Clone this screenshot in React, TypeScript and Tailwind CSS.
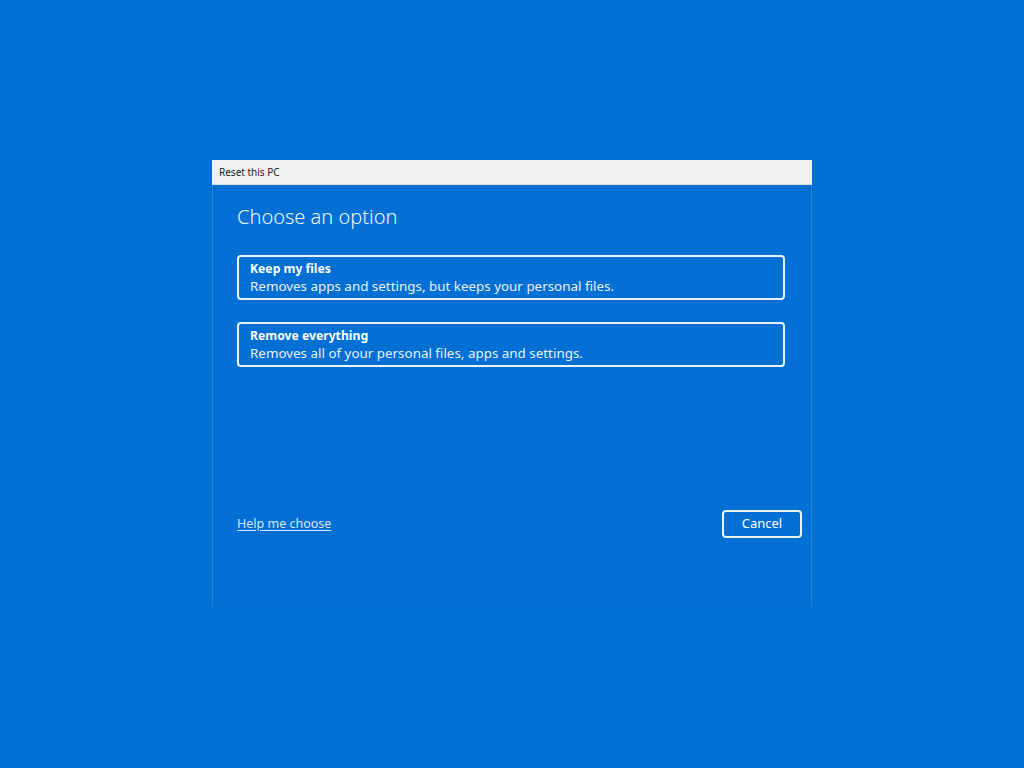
export default function App() {
  return (
    <div
      className="w-[1024px] h-[768px] bg-[#0170d5] pt-[160px] pl-[212px]"
      style={{ fontFamily: '"Segoe UI", "Noto Sans", "Open Sans", sans-serif' }}
    >
      <div className="w-[600px] flex flex-col">
        <div className="h-[25px] bg-[#f1f1f1] flex items-center pl-[7px] text-[10px] text-[#1a1a1a] border-b border-[#dcdcdc]">
          Reset this PC
        </div>
        <div className="h-[422px] border-x border-[#2a82d6] bg-[#016fd4] flex flex-col px-[24px] text-white">
          <h1 className="mt-[18px] text-[20px] font-light leading-[28px] text-[#eef5fc]">Choose an option</h1>
          <div className="mt-[24px] flex flex-col gap-[22px] w-[548px]">
            <button className="h-[45px] border-2 border-[#eaf3fc] rounded-[4px] flex flex-col justify-center pl-[11px] text-left">
              <span className="text-[12.2px] font-bold leading-[17px]">Keep my files</span>
              <span className="text-[13.4px] leading-[18px] text-[#e8f1fb]">Removes apps and settings, but keeps your personal files.</span>
            </button>
            <button className="h-[45px] border-2 border-[#eaf3fc] rounded-[4px] flex flex-col justify-center pl-[11px] text-left">
              <span className="text-[12.2px] font-bold leading-[17px]">Remove everything</span>
              <span className="text-[13.4px] leading-[18px] text-[#e8f1fb]">Removes all of your personal files, apps and settings.</span>
            </button>
          </div>
          <div className="mt-[143px] flex items-center justify-between">
            <a className="text-[12.5px] underline text-[#d6e8fa] underline-offset-2">Help me choose</a>
            <button className="mr-[-15px] w-[80px] h-[28px] border-2 border-[#eaf3fc] rounded-[4px] text-[13px] text-white">
              Cancel
            </button>
          </div>
        </div>
      </div>
    </div>
  )
}
